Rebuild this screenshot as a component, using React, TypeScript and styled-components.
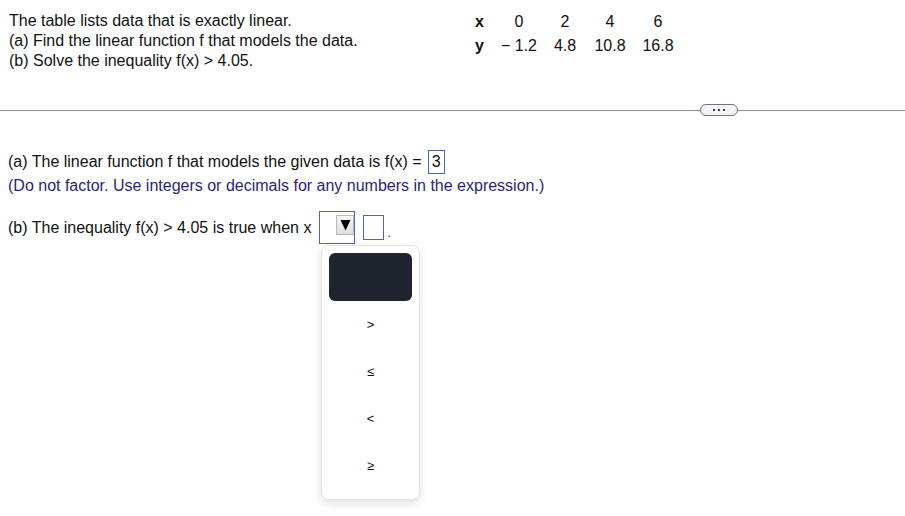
import React from "react";
import styled, { createGlobalStyle } from "styled-components";

const GlobalStyle = createGlobalStyle`
  html, body {
    margin: 0;
    padding: 0;
    background: #fff;
    font-family: "Liberation Sans", Arial, sans-serif;
    color: #111;
  }
`;

const Page = styled.div`
  width: 905px;
  height: 516px;
  overflow: hidden;
  position: relative;
`;

const Question = styled.div`
  display: flex;
  align-items: flex-start;
  padding: 11px 0 0 9px;
  height: 92px;
`;

const Prompt = styled.div`
  width: 466px;
  font-size: 16px;
  line-height: 20px;
`;

const DataTable = styled.table`
  border-collapse: collapse;
  font-size: 16px;
  margin-top: -1px;
  td {
    padding: 0;
    line-height: 24px;
    text-align: center;
  }
`;

const HeadCell = styled.td`
  font-weight: bold;
  width: 24px;
  text-align: left !important;
`;

const ValueCell = styled.td<{ $w: number }>`
  width: ${({ $w }) => $w}px;
`;

const Divider = styled.div`
  display: flex;
  align-items: center;
  height: 14px;
`;

const Rule = styled.div<{ $w?: number }>`
  height: 1px;
  background: #8a8f9a;
  ${({ $w }) => ($w ? `width: ${$w}px;` : "flex: 1;")}
`;

const MoreButton = styled.div`
  width: 36px;
  height: 10px;
  border: 1px solid #6f7480;
  border-radius: 6px;
  background: #f1f3f6;
  display: flex;
  align-items: center;
  justify-content: center;
  gap: 3px;
`;

const Dot = styled.span`
  width: 2px;
  height: 2px;
  background: #3a3f4a;
`;

const Answers = styled.div`
  padding: 33px 0 0 8px;
  font-size: 16px;
`;

const Line = styled.div<{ $color?: string; $mt?: number }>`
  display: flex;
  align-items: center;
  line-height: 20px;
  color: ${({ $color }) => $color || "#111"};
  margin-top: ${({ $mt }) => $mt || 0}px;
`;

const AnswerBox = styled.span<{ $w: number; $h: number; $ml?: number }>`
  display: inline-flex;
  align-items: center;
  justify-content: center;
  box-sizing: border-box;
  width: ${({ $w }) => $w}px;
  height: ${({ $h }) => $h}px;
  border: 1px solid #4a63c8;
  margin-left: ${({ $ml }) => $ml ?? 3}px;
`;

const SelectBox = styled.span`
  display: inline-flex;
  align-items: flex-start;
  justify-content: flex-end;
  box-sizing: border-box;
  width: 36px;
  height: 33px;
  border: 1px solid #4a63c8;
  margin-left: 8px;
  padding: 3px 0 0 0;
`;

const ArrowButton = styled.span`
  display: flex;
  align-items: center;
  justify-content: center;
  width: 18px;
  height: 20px;
  background: linear-gradient(#f7f7f7, #dedede);
  border: 1px solid #b8b8b8;
  box-sizing: border-box;
`;

const Period = styled.span`
  margin-left: 3px;
  align-self: flex-end;
  line-height: 14px;
  font-size: 12px;
  padding-bottom: 4px;
`;

const Menu = styled.div`
  position: absolute;
  left: 321px;
  top: 245px;
  width: 99px;
  height: 255px;
  box-sizing: border-box;
  background: #fff;
  border: 1px solid #e4e4e4;
  border-radius: 8px;
  box-shadow: 0 4px 10px rgba(0, 0, 0, 0.12);
  padding: 7px 7px 0 7px;
  display: flex;
  flex-direction: column;
`;

const Highlight = styled.div`
  height: 48px;
  border-radius: 6px;
  background: #20242f;
`;

const Option = styled.div`
  height: 47px;
  display: flex;
  align-items: center;
  justify-content: center;
  font-size: 13px;
  color: #111;
`;

export default function App() {
  return (
    <Page>
      <GlobalStyle />
      <Question>
        <Prompt>
          The table lists data that is exactly linear.
          <br />
          (a) Find the linear function f that models the data.
          <br />
          (b) Solve the inequality f(x) &gt; 4.05.
        </Prompt>
        <DataTable>
          <tbody>
            <tr>
              <HeadCell>x</HeadCell>
              <ValueCell $w={40}>0</ValueCell>
              <ValueCell $w={52}>2</ValueCell>
              <ValueCell $w={38}>4</ValueCell>
              <ValueCell $w={58}>6</ValueCell>
            </tr>
            <tr>
              <HeadCell>y</HeadCell>
              <ValueCell $w={40}>&minus; 1.2</ValueCell>
              <ValueCell $w={52}>4.8</ValueCell>
              <ValueCell $w={38}>10.8</ValueCell>
              <ValueCell $w={58}>16.8</ValueCell>
            </tr>
          </tbody>
        </DataTable>
      </Question>
      <Divider>
        <Rule $w={700} />
        <MoreButton>
          <Dot />
          <Dot />
          <Dot />
        </MoreButton>
        <Rule />
      </Divider>
      <Answers>
        <Line>
          (a) The linear function f that models the given data is f(x) =
          <AnswerBox $w={17} $h={24} $ml={6}>3</AnswerBox>
        </Line>
        <Line $color="#2a1f7a" $mt={2}>
          (Do not factor. Use integers or decimals for any numbers in the expression.)
        </Line>
        <Line $mt={15}>
          (b) The inequality f(x) &gt; 4.05 is true when x
          <SelectBox>
            <ArrowButton>
              <svg width="11" height="12" viewBox="0 0 11 12">
                <path d="M0.5 1 L10.5 1 L5.5 11.5 Z" fill="#000" />
              </svg>
            </ArrowButton>
          </SelectBox>
          <AnswerBox $w={21} $h={25} $ml={8} />
          <Period>.</Period>
        </Line>
      </Answers>
      <Menu>
        <Highlight />
        <Option>&gt;</Option>
        <Option>&le;</Option>
        <Option>&lt;</Option>
        <Option>&ge;</Option>
      </Menu>
    </Page>
  );
}
